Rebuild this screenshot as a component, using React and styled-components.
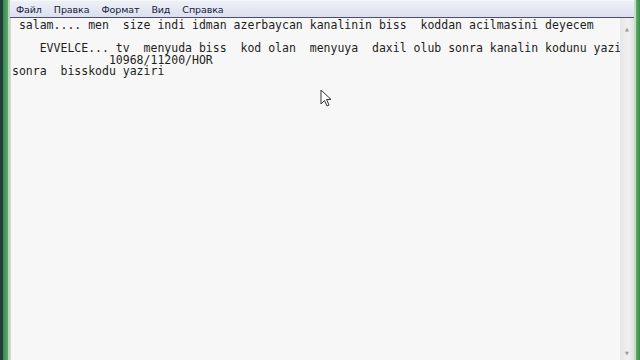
import React from 'react'
import styled, { createGlobalStyle } from 'styled-components'

const GlobalStyle = createGlobalStyle`
  html, body {
    margin: 0;
    padding: 0;
    background: #f7f7f7;
  }
`

const Frame = styled.div`
  width: 640px;
  height: 360px;
  display: flex;
  flex-direction: row;
  overflow: hidden;
  position: relative;
`
const Edge = styled.div`
  width: ${props => props.width}px;
  background: ${props => props.bg};
  flex-shrink: 0;
`
const Window = styled.div`
  flex: 1;
  display: flex;
  flex-direction: column;
  min-width: 0;
`
const MenuBar = styled.div`
  height: 16px;
  display: flex;
  flex-direction: row;
  align-items: center;
  background: linear-gradient(#eef0f8, #dcdfee);
  border-bottom: 1px solid #4e4e66;
  border-top: 1px solid #f6f7fb;
`
const MenuItem = styled.span`
  font-family: "DejaVu Sans", sans-serif;
  font-size: 9.5px;
  color: #17213a;
  padding: 0 6px;
  letter-spacing: -0.1px;
`
const Body = styled.div`
  flex: 1;
  display: flex;
  flex-direction: row;
  min-height: 0;
`
const TextArea = styled.pre`
  flex: 1;
  margin: 0;
  padding: 2px 0 0 1px;
  background: #f7f7f7;
  font-family: "DejaVu Sans Mono", monospace;
  font-size: 11.5px;
  line-height: 11.5px;
  color: #1e1e22;
  overflow: hidden;
  white-space: pre;
  border-left: 1px solid #d8d8d8;
`
const Scrollbar = styled.div`
  width: 14px;
  display: flex;
  flex-direction: column;
  justify-content: space-between;
  align-items: center;
  background: linear-gradient(to right, #e6e6e6, #f0f0f0 60%, #e2e2e2);
  padding: 9px 0 4px;
`
const Arrow = styled.span`
  font-family: "DejaVu Sans", sans-serif;
  font-size: 5px;
  line-height: 5px;
  color: #9a9a9a;
`
const Pointer = styled.svg`
  position: absolute;
  left: 320px;
  top: 89px;
`

const menus = ['Файл', 'Правка', 'Формат', 'Вид', 'Справка']

const lines = [
  ' salam.... men  size indi idman azerbaycan kanalinin biss  koddan acilmasini deyecem',
  '',
  '    EVVELCE... tv  menyuda biss  kod olan  menyuya  daxil olub sonra kanalin kodunu yazirsan',
  '              10968/11200/HOR',
  'sonra  bisskodu yaziri',
]

const App = () => {
  return (
    <Frame>
      <GlobalStyle />
      <Edge width={3} bg="#1c3d3a" />
      <Edge width={5} bg="linear-gradient(to right, #3b8a4c, #5aa86a)" />
      <Edge width={2} bg="#b9d8bf" />
      <Window>
        <MenuBar>
          {menus.map(item => (
            <MenuItem key={item}>{item}</MenuItem>
          ))}
        </MenuBar>
        <Body>
          <TextArea>{lines.join('\n')}</TextArea>
          <Scrollbar>
            <Arrow>▲</Arrow>
            <Arrow>▼</Arrow>
          </Scrollbar>
        </Body>
      </Window>
      <Edge width={2} bg="#c4e0c8" />
      <Edge width={4} bg="linear-gradient(to right, #5cae6a, #3a8a4a)" />
      <Pointer width="12" height="19" viewBox="0 0 12 19">
        <path d="M1 1 L1 15 L4.5 11.5 L7 17 L9 16 L6.5 10.5 L11 10.5 Z" fill="#fff" stroke="#333" strokeWidth="1" strokeLinejoin="round" />
      </Pointer>
    </Frame>
  )
}

export default App
